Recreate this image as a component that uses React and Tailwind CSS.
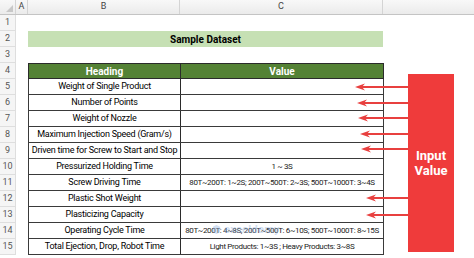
import React from 'react';

const rows = [
  { n: 1 },
  { n: 2, title: true },
  { n: 3 },
  { n: 4, head: true },
  { n: 5, b: 'Weight of Single Product' },
  { n: 6, b: 'Number of Points' },
  { n: 7, b: 'Weight of Nozzle' },
  { n: 8, b: 'Maximum Injection Speed (Gram/s)' },
  { n: 9, b: 'Driven time for Screw to Start and Stop' },
  { n: 10, b: 'Pressurized Holding Time', c: '1 ~ 3S' },
  { n: 11, b: 'Screw Driving Time', c: '80T~200T: 1~2S; 200T~500T: 2~3S; 500T~1000T: 3~4S' },
  { n: 12, b: 'Plastic Shot Weight' },
  { n: 13, b: 'Plasticizing Capacity' },
  { n: 14, b: 'Operating Cycle Time', c: '80T~200T: 4~8S; 200T~500T: 6~10S; 500T~1000T: 8~15S' },
  { n: 15, b: 'Total Ejection, Drop, Robot Time', c: 'Light Products: 1~3S ; Heavy Products: 3~8S' },
];

const arrows = [
  { y: 87, tip: 355 },
  { y: 103, tip: 357 },
  { y: 118, tip: 358 },
  { y: 134, tip: 360 },
  { y: 149, tip: 361 },
  { y: 198, tip: 366 },
  { y: 215, tip: 366 },
];

const RowCells = ({ row }) => {
  if (row.title) {
    return (
      <div className="w-[355px] h-full bg-[#c6e0b4] flex items-center justify-center text-[10px] font-bold text-black">
        Sample Dataset
      </div>
    );
  }
  if (row.head) {
    return (
      <div className="flex h-full border border-[#2b2b2b] bg-[#548235] text-white text-[10px] font-bold">
        <div className="w-[152px] flex items-center justify-center border-r border-[#2b2b2b]">Heading</div>
        <div className="w-[202px] flex items-center justify-center">Value</div>
      </div>
    );
  }
  if (row.b) {
    return (
      <div className="flex h-full border-x border-b border-[#3a3a3a] text-black">
        <div className="w-[152px] flex items-center justify-center border-r border-[#2b2b2b] text-[9px] tracking-[-0.25px] whitespace-nowrap">
          {row.b}
        </div>
        <div className="w-[202px] flex items-center justify-center text-[8px] tracking-[-0.35px] whitespace-nowrap text-[#222]">
          {row.c || ''}
        </div>
      </div>
    );
  }
  return null;
};

export default function App() {
  return (
    <div className="relative w-[474px] h-[258px] bg-white overflow-hidden font-['Roboto',sans-serif]">
      {/* column headers */}
      <div className="flex h-[15px] bg-gradient-to-b from-[#f8f8f8] to-[#ebebeb] border-b border-[#c4c4c4] text-[9px] text-[#444]">
        <div className="relative w-[16px] border-r border-[#d4d4d4]">
          <svg className="absolute right-[2px] bottom-[2px]" width="7" height="7" viewBox="0 0 7 7">
            <path d="M7 0 L7 7 L0 7 Z" fill="#c8c8c8" />
          </svg>
        </div>
        <div className="w-[12px] flex items-center justify-center border-r border-[#d4d4d4]">A</div>
        <div className="w-[152px] flex items-center justify-center border-r border-[#d4d4d4]">B</div>
        <div className="w-[203px] flex items-center justify-center border-r border-[#d4d4d4]">C</div>
        <div className="flex-1" />
      </div>

      {/* sheet rows */}
      {rows.map(row => (
        <div key={row.n} className="flex h-[16px]">
          <div className="w-[16px] shrink-0 flex items-center justify-center bg-[#f5f5f5] border-r border-b border-[#dedede] text-[9px] text-[#555]">
            {row.n}
          </div>
          <div className="w-[12px] shrink-0" />
          <RowCells row={row} />
        </div>
      ))}

      {/* watermark */}
      <div className="absolute left-[212px] top-[224px] flex items-center gap-[3px] opacity-40 pointer-events-none">
        <svg width="9" height="9" viewBox="0 0 10 10">
          <path d="M1 2 L5 0 L9 2 L9 8 L5 10 L1 8 Z" fill="#8fb0e0" />
        </svg>
        <span className="text-[11px] leading-none font-bold text-[#8fb0e0] tracking-[0.3px]">exceldemy</span>
      </div>

      {/* arrows */}
      <svg className="absolute left-0 top-0" width="474" height="258" viewBox="0 0 474 258">
        {arrows.map(a => (
          <g key={a.y}>
            <line x1={a.tip + 6} y1={a.y} x2={409} y2={a.y} stroke="#e8403f" strokeWidth="2" />
            <path d={`M${a.tip} ${a.y} L${a.tip + 10} ${a.y - 3.5} L${a.tip + 7} ${a.y} L${a.tip + 10} ${a.y + 3.5} Z`} fill="#e8403f" />
          </g>
        ))}
      </svg>

      {/* input value box */}
      <div className="absolute left-[408px] top-[74px] w-[46px] h-[178px] bg-[#ef3b3b] flex flex-col items-center justify-center text-white font-bold text-[13px] leading-[15px]">
        <span>Input</span>
        <span>Value</span>
      </div>
    </div>
  );
}
